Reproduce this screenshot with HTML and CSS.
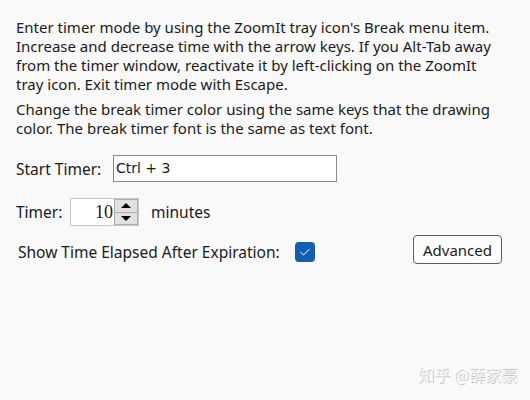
FILE: index.html
```html
<!DOCTYPE html>
<html lang="en">
<head>
  <meta charset="UTF-8" />
  <title>ZoomIt Break</title>
  <link rel="stylesheet" href="styles.css">
</head>
<body>

  <main class="break-page">
    <p class="info">Enter timer mode by using the ZoomIt tray icon's Break menu item. Increase and decrease time with the arrow keys. If you Alt-Tab away from the timer window, reactivate it by left-clicking on the ZoomIt tray icon. Exit timer mode with Escape.</p>
    <p class="info">Change the break timer color using the same keys that the drawing color. The break timer font is the same as text font.</p>

    <div class="row start-row">
      <label class="label">Start Timer:</label>
      <div class="hotkey">Ctrl + 3</div>
    </div>

    <div class="row timer-row">
      <label class="label">Timer:</label>
      <div class="spinner">
        <span class="spin-value">10</span>
        <div class="spin-buttons">
          <button class="spin-btn"><span class="arrow up"></span></button>
          <button class="spin-btn"><span class="arrow down"></span></button>
        </div>
      </div>
      <span class="label">minutes</span>
    </div>

    <div class="row elapsed-row">
      <label class="label">Show Time Elapsed After Expiration:</label>
      <span class="checkbox">
        <svg width="12" height="10" viewBox="0 0 12 10">
          <path d="M1.5 5.2 L4.5 8 L10.5 2" fill="none" stroke="#fff" stroke-width="1"/>
        </svg>
      </span>
      <button class="advanced-btn">Advanced</button>
    </div>
  </main>

  <div class="watermark">知乎 @薛家豪</div>

</body>
</html>
```

FILE: styles.css
```css
* {
  margin: 0;
  padding: 0;
  box-sizing: border-box;
}

html, body {
  width: 530px;
  height: 400px;
  background: #f9f9f9;
  color: #1b1b1b;
  font-family: "Noto Sans", "Open Sans", sans-serif;
  font-size: 15px;
  overflow: hidden;
}

.break-page {
  padding: 18px 16px 0 16px;
}

.info {
  width: 484px;
  line-height: 19px;
  margin-bottom: 6px;
}

.row {
  display: flex;
  align-items: center;
}

.label {
  font-size: 15.5px;
}

.start-row {
  margin-top: 17px;
  height: 27px;
}

.start-row .label {
  width: 97px;
}

.hotkey {
  width: 224px;
  height: 27px;
  background: #fff;
  border: 1px solid #8a8a8a;
  padding: 3px 2px;
  font-family: "DejaVu Sans", sans-serif;
  font-size: 14px;
  line-height: 19px;
}

.timer-row {
  margin-top: 16px;
  height: 28px;
}

.timer-row .label:first-child {
  width: 54px;
}

.spinner {
  display: flex;
  width: 69px;
  height: 28px;
  background: #fff;
  border: 1px solid #c8c8c8;
  margin-right: 12px;
}

.spin-value {
  flex: 1;
  text-align: right;
  font-family: "Liberation Serif", serif;
  font-size: 18px;
  line-height: 26px;
  padding-right: 1px;
}

.spin-buttons {
  display: flex;
  flex-direction: column;
  width: 24px;
}

.spin-btn {
  flex: 1;
  background: #e1e1e1;
  border: 1px solid #adadad;
  display: flex;
  align-items: center;
  justify-content: center;
}

.spin-btn + .spin-btn {
  border-top: none;
}

.arrow {
  width: 0;
  height: 0;
  border-left: 5px solid transparent;
  border-right: 5px solid transparent;
}

.arrow.up {
  border-bottom: 5px solid #000;
}

.arrow.down {
  border-top: 5px solid #000;
}

.elapsed-row {
  margin-top: 11px;
  padding-left: 2px;
  height: 30px;
}

.checkbox {
  width: 20px;
  height: 20px;
  background: #0f5fb5;
  border-radius: 4px;
  margin-left: 15px;
  display: flex;
  align-items: center;
  justify-content: center;
}

.advanced-btn {
  align-self: flex-start;
  margin-top: -2px;
  margin-left: auto;
  margin-right: 12px;
  width: 89px;
  height: 29px;
  background: #fdfdfd;
  border: 1px solid #2a6c8c;
  border-radius: 4px;
  font-family: "Noto Sans", sans-serif;
  font-size: 15px;
  color: #1b1b1b;
}

.watermark {
  position: absolute;
  right: 13px;
  bottom: 14px;
  font-family: "Noto Sans CJK SC", sans-serif;
  font-size: 16px;
  color: #f4f4f4;
  text-shadow: 1px 1px 0 #c8c8c8, -1px -1px 0 #fff;
}
```
